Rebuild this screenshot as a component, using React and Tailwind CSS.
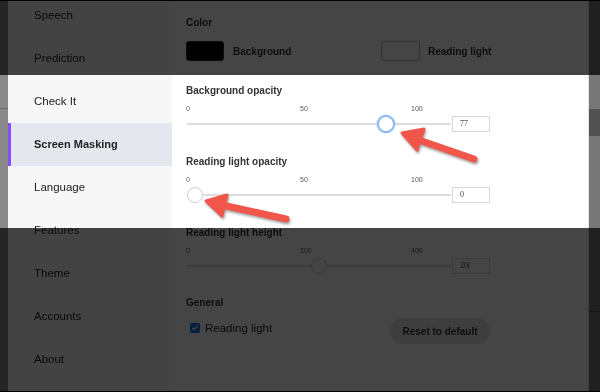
const NAV_ITEMS = [
  'Speech',
  'Prediction',
  'Check It',
  'Screen Masking',
  'Language',
  'Features',
  'Theme',
  'Accounts',
  'About',
];

const Slider = ({ ticks, thumbClass, value }) => (
  <div>
    <div className="mt-[7px] flex h-[10px] items-center text-[7px] leading-[10px] text-[#555]">
      <span className="w-[114px]">{ticks[0]}</span>
      <span className="w-[111px]">{ticks[1]}</span>
      <span>{ticks[2]}</span>
    </div>
    <div className="mt-[2px] flex h-[16px] items-center pl-px">
      <div className="relative h-[2px] w-[264px] bg-[#dcdcdc]">
        <div className={thumbClass} />
      </div>
      <div className="ml-px flex h-[16px] w-[38px] items-center border border-[#d9d9d9] bg-white pl-[7px] font-['Liberation_Serif',serif] text-[8px] text-[#444]">
        {value}
      </div>
    </div>
  </div>
);

const App = () => {
  return (
    <div className="relative flex h-[392px] w-[600px] overflow-hidden border-y border-black bg-[#888] font-['Liberation_Sans',Arial,sans-serif] antialiased [will-change:transform]">
      {/* page behind the dialog, left edge */}
      <div className="flex w-[8px] shrink-0 flex-col bg-[#8a8a8a]">
        <div className="mt-[107px] h-px bg-[#6e6e6e]" />
      </div>

      {/* dialog */}
      <div className="flex h-full w-[581px] shrink-0 bg-white">
        {/* sidebar */}
        <div className="w-[164px] shrink-0 bg-[#f7f7f7]">
          <div className="-mt-[7px]">
            {NAV_ITEMS.map((item) =>
              item === 'Screen Masking' ? (
                <div
                  key={item}
                  className="flex h-[43px] items-center border-l-[3px] border-[#8b4dff] bg-[#e5e7ef] pl-[23px] text-[11px] font-bold text-[#222]"
                >
                  {item}
                </div>
              ) : (
                <div key={item} className="flex h-[43px] items-center pl-[26px] text-[11.5px] text-[#222]">
                  {item}
                </div>
              )
            )}
          </div>
        </div>

        {/* settings */}
        <div className="flex-1 border-r border-[#e6e6e6] pl-[14px] pt-[16px] text-[#333]">
          <div className="h-[12px] text-[10px] font-bold leading-[12px]">Color</div>
          <div className="mt-[12px] flex h-[20px] items-center">
            <div className="h-[20px] w-[38px] rounded-[3px] border border-[#333] bg-black" />
            <span className="ml-[9px] w-[148px] text-[10px] font-bold">Background</span>
            <div className="h-[20px] w-[39px] rounded-[3px] border border-[#bbb] bg-white" />
            <span className="ml-[8px] text-[10px] font-bold">Reading light</span>
          </div>

          <div className="mt-[24px] h-[12px] text-[10px] font-bold leading-[12px]">Background opacity</div>
          <Slider
            ticks={['0', '50', '100']}
            value="77"
            thumbClass="absolute left-[190px] top-[-8px] h-[18px] w-[18px] rounded-full border-2 border-[#8fb8f5] bg-white shadow-[0_0_2px_#8fb8f5]"
          />

          <div className="mt-[24px] h-[12px] text-[10px] font-bold leading-[12px]">Reading light opacity</div>
          <Slider
            ticks={['0', '50', '100']}
            value="0"
            thumbClass="absolute left-0 top-[-7px] h-[16px] w-[16px] rounded-full border border-[#cfcfcf] bg-white"
          />

          <div className="mt-[24px] h-[12px] text-[10px] font-bold leading-[12px]">Reading light height</div>
          <Slider
            ticks={['0', '200', '400']}
            value="20("
            thumbClass="absolute left-[124px] top-[-7px] h-[16px] w-[16px] rounded-full border border-[#cfcfcf] bg-white"
          />

          <div className="mt-[23px] h-[12px] text-[10px] font-bold leading-[12px]">General</div>
          <div className="mt-[9px] flex h-[26px] w-[304px] items-start">
            <div className="ml-[4px] mt-[5px] flex h-[10px] w-[10px] items-center justify-center rounded-[2px] bg-[#1a6ee8]">
              <svg viewBox="0 0 10 10" className="h-[8px] w-[8px]" fill="none" stroke="white" strokeWidth="1.6" strokeLinecap="round" strokeLinejoin="round">
                <path d="M2 5.3l2 2 4-4.6" />
              </svg>
            </div>
            <span className="ml-[5px] mt-[2px] text-[11.5px] text-[#222]">Reading light</span>
            <button className="ml-auto h-[26px] w-[100px] rounded-full bg-[#e6e6e6] text-[10px] font-bold text-[#333]">
              Reset to default
            </button>
          </div>
        </div>
      </div>

      {/* page behind the dialog, right edge */}
      <div className="flex w-[11px] shrink-0 flex-col bg-[#777]">
        <div className="mt-[108px] h-[27px] bg-[#525252]" />
        <div className="mt-[175px] h-px bg-[#555]" />
      </div>

      {/* screen masking overlay */}
      <div className="absolute inset-x-0 top-0 h-[74px] bg-black/[0.73]" />
      <div className="absolute inset-x-0 bottom-0 top-[227px] bg-black/[0.73]" />

      {/* annotation arrows */}
      <svg className="pointer-events-none absolute inset-0 h-[392px] w-[600px]" viewBox="0 0 600 392">
        <g fill="#f0564a" stroke="#f0564a" strokeLinecap="round" strokeLinejoin="round" style={{ filter: 'drop-shadow(1px 2px 1px rgba(0,0,0,0.35))' }}>
          <path d="M474 158L416 138" strokeWidth="7" fill="none" />
          <path d="M402 132L424 128L417 149Z" strokeWidth="3" />
          <path d="M286 218L222 204" strokeWidth="7" fill="none" />
          <path d="M206 200L227 194L222 215Z" strokeWidth="3" />
        </g>
      </svg>
    </div>
  );
};

export default App;
